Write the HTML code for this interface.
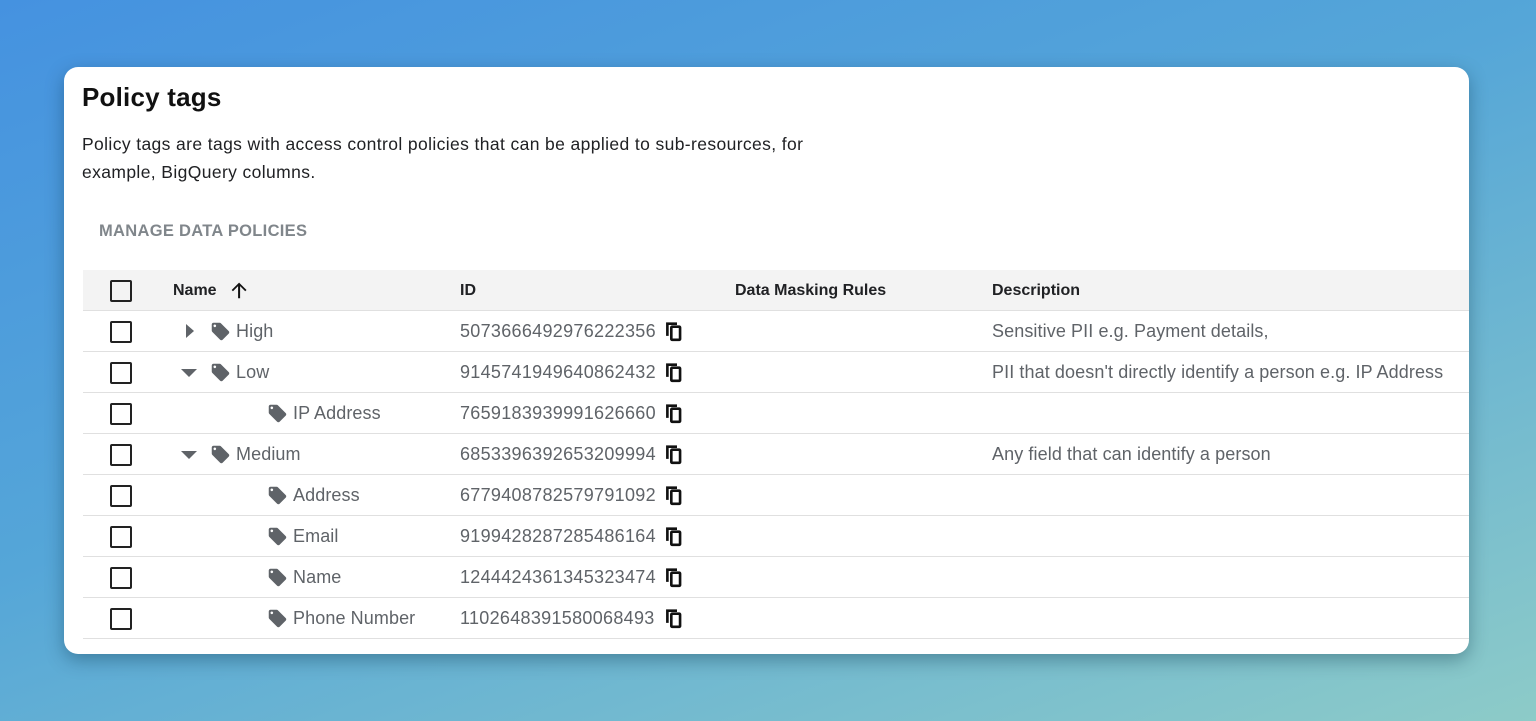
<!DOCTYPE html>
<html><head><meta charset="utf-8"><style>
*{margin:0;padding:0;box-sizing:border-box}
body{width:1536px;height:721px;overflow:hidden;font-family:"Liberation Sans",Arial,sans-serif;background:linear-gradient(160deg,#4592e0 0%,#55a6d8 45%,#8dcbc8 100%);position:relative}
.card{position:absolute;left:64px;top:67px;width:1405px;height:587px;background:#fff;border-radius:14px;box-shadow:0 6px 18px rgba(0,40,60,.35);overflow:hidden}
.t{position:absolute;white-space:nowrap}
h1{position:absolute;left:18px;top:15px;font-size:26px;font-weight:700;color:#111;letter-spacing:.2px}
.desc{position:absolute;left:18px;top:63px;font-size:17.5px;line-height:28px;color:#202124;letter-spacing:.38px}
.btn{position:absolute;left:35px;top:155px;font-size:16.5px;color:#80868b;font-weight:600;letter-spacing:.3px}
.hdr{position:absolute;left:19px;top:203px;width:1386px;height:41px;background:#f3f3f3;border-bottom:1px solid #e0e0e0}
.row{position:absolute;left:19px;width:1386px;height:41px;border-bottom:1px solid #e0e0e0}
.cb{position:absolute;left:27px;top:10px;width:22px;height:22px;border:2px solid #222;border-radius:2px}
.row .t{top:10px;font-size:18px;color:#5f6368;letter-spacing:.1px}
.row .id{letter-spacing:.3px}
.hdr .t{top:12px;font-size:16px;color:#202124;font-weight:600}
svg{position:absolute}
</style></head><body>
<div class="card">
<h1>Policy tags</h1>
<div class="desc">Policy tags are tags with access control policies that can be applied to sub-resources, for<br>example, BigQuery columns.</div>
<div class="btn">MANAGE DATA POLICIES</div>
<div class="hdr"><div class="cb"></div>
<div class="t" style="left:90px">Name</div>
<svg style="left:145px;top:9px" width="22" height="22" viewBox="0 0 24 24"><path d="M4 12l1.41 1.41L11 7.83V21h2.2V7.83l5.58 5.59L20.2 12l-8.1-8.1z" fill="#111"/></svg>
<div class="t" style="left:377px">ID</div>
<div class="t" style="left:652px">Data Masking Rules</div>
<div class="t" style="left:909px">Description</div>
</div>
<div id="rows"></div>
</div>
<script>
var rows=[
["r","High","5073666492976222356","Sensitive PII e.g. Payment details,"],
["d","Low","9145741949640862432","PII that doesn't directly identify a person e.g. IP Address"],
["c","IP Address","7659183939991626660",""],
["d","Medium","6853396392653209994","Any field that can identify a person"],
["c","Address","6779408782579791092",""],
["c","Email","9199428287285486164",""],
["c","Name","1244424361345323474",""],
["c","Phone Number","1102648391580068493",""]];
var tag='<path d="M21.41 11.58l-9-9C12.050 2.22 11.55 2 11 2H4c-1.1 0-2 .9-2 2v7c0 .55.22 1.05.59 1.42l9 9c.36.36.86.58 1.410.58s1.05-.22 1.41-.59l7-7c.37-.36.59-.86.59-1.41s-.23-1.06-.59-1.42zM5.5 7C4.67 7 4 6.33 4 5.5S4.67 4 5.5 4 7 4.67 7 5.5 6.33 7 5.5 7z" fill="#5f6368"/>';
var copy='<path d="M4 17V3h11" fill="none" stroke="#111" stroke-width="3"/><rect x="8.5" y="6.5" width="10" height="15" rx="1" fill="none" stroke="#111" stroke-width="3"/>';
var h='';
rows.forEach(function(r,i){
 var top=244+i*41, s='<div class="row" style="top:'+top+'px"><div class="cb"></div>';
 var tx=r[0]=='c'?184:127, tl=r[0]=='c'?210:153;
 if(r[0]=='r') s+='<svg style="left:102px;top:12px" width="10" height="16" viewBox="0 0 10 16"><path d="M1 1l8 7-8 7z" fill="#5f6368"/></svg>';
 if(r[0]=='d') s+='<svg style="left:97px;top:16px" width="18" height="10" viewBox="0 0 18 10"><path d="M1 1h16l-8 8z" fill="#5f6368"/></svg>';
 s+='<svg style="left:'+tx+'px;top:10px" width="21" height="21" viewBox="0 0 24 24">'+tag+'</svg>';
 s+='<div class="t" style="left:'+tl+'px">'+r[1]+'</div>';
 s+='<div class="t id" style="left:377px">'+r[2]+'</div>';
 s+='<svg style="left:581px;top:10px" width="19" height="21" viewBox="1 0 20 24">'+copy+'</svg>';
 s+='<div class="t" style="left:909px">'+r[3]+'</div></div>';
 h+=s;});
document.getElementById('rows').innerHTML=h;
</script>
</body></html>
